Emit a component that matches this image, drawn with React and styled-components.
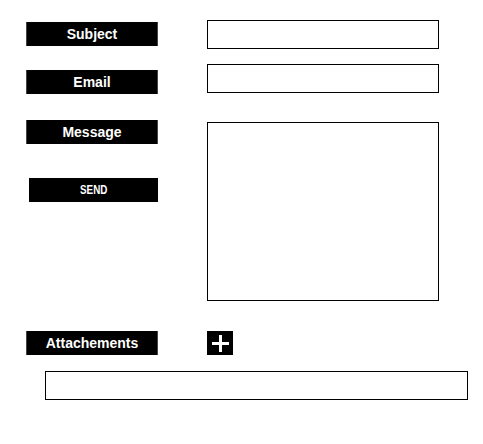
import React from "react";
import styled, { createGlobalStyle } from "styled-components";

const Global = createGlobalStyle`
  html, body { margin: 0; padding: 0; background: #fff; }
  body { font-family: "Liberation Sans", Arial, sans-serif; }
`;

const Form = styled.form`
  display: flex;
  flex-direction: column;
  padding: 20px 0 0 26px;
  width: 483px;
  box-sizing: border-box;
`;

const Row = styled.div`
  display: flex;
  align-items: flex-start;
  gap: 49px;
  margin-top: ${(p) => p.$gap || 0}px;
`;

const LeftCol = styled.div`
  display: flex;
  flex-direction: column;
  width: 132px;
  flex: none;
`;

const Label = styled.label`
  display: block;
  box-sizing: border-box;
  width: 132px;
  height: 24px;
  margin-top: ${(p) => p.$offset || 0}px;
  background: #000;
  border-left: 1px solid #444;
  border-right: 1px solid #444;
  color: #fff;
  font: bold 14px/24px "Liberation Sans", Arial, sans-serif;
  text-align: center;
`;

const SendButton = styled.button`
  box-sizing: border-box;
  width: 129px;
  height: 24px;
  margin: 34px 0 0 3px;
  padding: 0;
  border: none;
  background: #000;
  color: #fff;
  font: bold 12px/24px "Liberation Sans", Arial, sans-serif;
  text-align: center;
  cursor: pointer;
`;

/* condensed caption inside the send button */
const Narrow = styled.span`
  display: inline-block;
  transform: scaleX(0.82);
`;

const Field = styled.input`
  box-sizing: border-box;
  width: 232px;
  height: 29px;
  margin: 0;
  border: 1px solid #000;
  background: #fff;
  outline: none;
`;

const MessageArea = styled.textarea`
  box-sizing: border-box;
  width: 232px;
  height: 179px;
  margin: 2px 0 0 0;
  border: 1px solid #000;
  background: #fff;
  resize: none;
  outline: none;
  display: block;
`;

const AddButton = styled.button`
  box-sizing: border-box;
  width: 26px;
  height: 24px;
  padding: 0;
  border: none;
  background: #000;
  display: flex;
  align-items: center;
  justify-content: center;
  cursor: pointer;
`;

const AttachmentList = styled.div`
  box-sizing: border-box;
  width: 423px;
  height: 29px;
  margin: 16px 0 0 19px;
  border: 1px solid #000;
`;

export default function App() {
  return (
    <>
      <Global />
      <Form onSubmit={(e) => e.preventDefault()}>
        <Row>
          <Label $offset={2}>Subject</Label>
          <Field type="text" />
        </Row>
        <Row $gap={15}>
          <Label $offset={6}>Email</Label>
          <Field type="email" />
        </Row>
        <Row $gap={26}>
          <LeftCol>
            <Label>Message</Label>
            <SendButton type="submit">
              <Narrow>SEND</Narrow>
            </SendButton>
          </LeftCol>
          <MessageArea />
        </Row>
        <Row $gap={30}>
          <Label>Attachements</Label>
          <AddButton type="button" aria-label="Add attachment">
            <svg width="17" height="17" viewBox="0 0 17 17">
              <rect x="0" y="7" width="17" height="3" fill="#fff" />
              <rect x="7" y="0" width="3" height="17" fill="#fff" />
            </svg>
          </AddButton>
        </Row>
        <AttachmentList />
      </Form>
    </>
  );
}
